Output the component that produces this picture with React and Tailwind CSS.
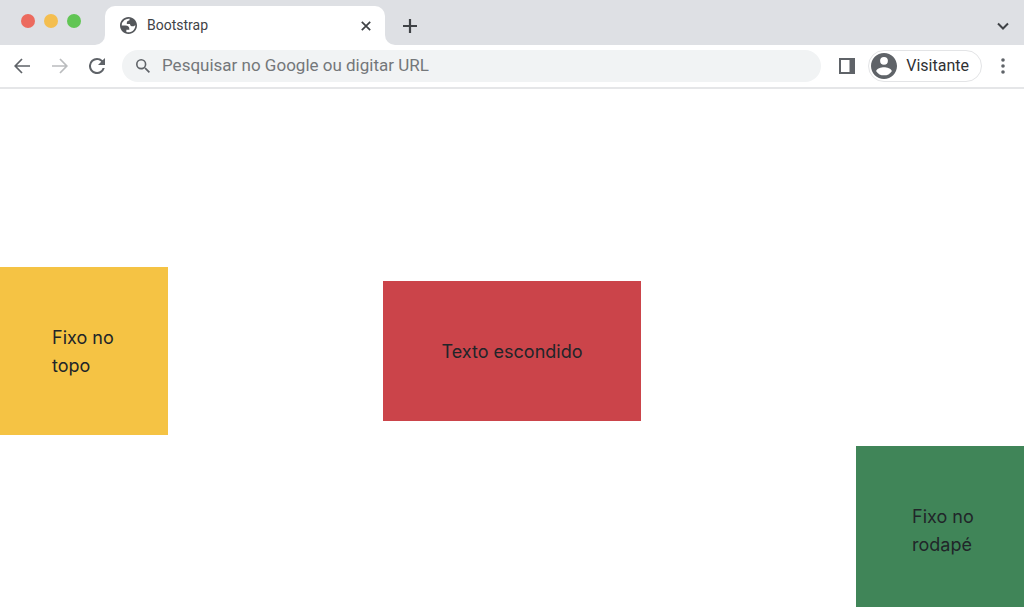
const windowButtons = ['bg-[#ec6a5e]', 'bg-[#f4be4f]', 'bg-[#61c554]']

function TabStrip() {
  return (
    <div className="flex h-[45px] bg-white">
      <div className="flex w-[105px] items-start gap-[9px] rounded-br-[10px] bg-[#dee0e4] pt-[14px] pl-[21px]">
        {windowButtons.map(color => (
          <span key={color} className={`size-[14px] rounded-full ${color}`} />
        ))}
      </div>
      <div className="bg-[#dee0e4] pt-[6px]">
        <div className="flex h-full w-[280px] items-center rounded-t-[10px] bg-white pr-3 pl-[15px]">
          <svg viewBox="2 2 20 20" className="size-[17px] text-[#54575b]" fill="currentColor">
            <path
              fillRule="evenodd"
              d="M12 2C6.48 2 2 6.48 2 12s4.48 10 10 10 10-4.48 10-10S17.52 2 12 2zM4 12h4.4c3.407.022 4.922 1.73 4.543 5.127H9.488v2.47a8.004 8.004 0 0 0 10.498-8.083C19.327 12.504 18.332 13 17 13c-2.137 0-3.206-.916-3.206-2.75h-3.748c-.274-2.728.683-4.092 2.87-4.092 0-.975.327-1.597.811-1.97A8.004 8.004 0 0 0 4 12z"
            />
          </svg>
          <span className="ml-[10px] flex-1 text-[14px] text-[#3f4246]">Bootstrap</span>
          <button aria-label="Fechar guia" className="flex size-[14px] items-center justify-center text-[#3f4246]">
            <svg viewBox="0 0 10 10" className="size-[10px]" fill="none" stroke="currentColor" strokeWidth="1.7">
              <path d="M.8.8l8.4 8.4M9.2.8L.8 9.2" />
            </svg>
          </button>
        </div>
      </div>
      <div className="flex flex-1 items-center justify-between rounded-bl-[10px] bg-[#dee0e4] pt-[6px] pr-[15px] pl-[18px] text-[#3f4246]">
        <button aria-label="Nova guia">
          <svg viewBox="0 0 14 14" className="size-[14px]" fill="none" stroke="currentColor" strokeWidth="2.2">
            <path d="M7 0v14M0 7h14" />
          </svg>
        </button>
        <button aria-label="Pesquisar guias">
          <svg viewBox="0 0 12 8" className="h-[8px] w-[12px]" fill="none" stroke="currentColor" strokeWidth="2">
            <path d="M1 1.5l5 5 5-5" />
          </svg>
        </button>
      </div>
    </div>
  )
}

function Toolbar() {
  return (
    <div className="flex h-[44px] items-center border-b-2 border-[#e5e6e8] bg-white pr-[19px] pl-[14px] text-[#5f6368]">
      <button aria-label="Voltar">
        <svg viewBox="0 0 16 16" className="size-[16px]" fill="none" stroke="currentColor" strokeWidth="1.7">
          <path d="M16 8H1.5M8 1L1.2 8 8 15" />
        </svg>
      </button>
      <button aria-label="Avançar" className="ml-[22px] text-[#babcbe]">
        <svg viewBox="0 0 16 16" className="size-[16px]" fill="none" stroke="currentColor" strokeWidth="1.7">
          <path d="M0 8h14.5M8 1l6.8 7L8 15" />
        </svg>
      </button>
      <button aria-label="Recarregar" className="ml-[21px]">
        <svg viewBox="4 4 16 16" className="size-[16px]" fill="currentColor">
          <path d="M17.65 6.35A7.96 7.96 0 0 0 12 4a8 8 0 1 0 7.73 10h-2.08A6 6 0 1 1 12 6c1.66 0 3.14.69 4.22 1.78L13 11h7V4z" />
        </svg>
      </button>
      <label className="ml-[17px] flex h-[32px] flex-1 items-center rounded-full bg-[#f1f3f4] pl-[14px]">
        <svg viewBox="3 3 17.5 17.5" className="size-[14px]" fill="currentColor">
          <path d="M15.5 14h-.79l-.28-.27A6.47 6.47 0 0 0 16 9.5 6.5 6.5 0 1 0 9.5 16c1.61 0 3.09-.59 4.23-1.57l.27.28v.79l5 4.99L20.49 19zm-6 0a4.5 4.5 0 1 1 0-9 4.5 4.5 0 0 1 0 9z" />
        </svg>
        <input
          type="text"
          aria-label="Barra de endereço"
          placeholder="Pesquisar no Google ou digitar URL"
          className="ml-[12px] min-w-0 flex-1 bg-transparent text-[17px] outline-none placeholder:text-[#74777a]"
        />
      </label>
      <button aria-label="Painel lateral" className="ml-[18px]">
        <svg viewBox="0 0 16 16" className="size-[16px]" fill="currentColor">
          <path fillRule="evenodd" d="M0 0h16v16H0zM2 2v12h8.5V2z" />
        </svg>
      </button>
      <button className="ml-[13px] flex h-[32px] items-center gap-[9px] rounded-full border border-[#e3e4e6] pr-[12px] pl-[2px]">
        <svg viewBox="2 2 20 20" className="size-[26px]" fill="currentColor">
          <path d="M12 2C6.48 2 2 6.48 2 12s4.48 10 10 10 10-4.48 10-10S17.52 2 12 2zm0 3a3 3 0 1 1 0 6 3 3 0 0 1 0-6zm0 14.2a7.2 7.2 0 0 1-6-3.22c.03-1.99 4-3.08 6-3.08 1.99 0 5.97 1.09 6 3.08a7.2 7.2 0 0 1-6 3.22z" />
        </svg>
        <span className="text-[16px] text-[#2f3134]">Visitante</span>
      </button>
      <button aria-label="Menu" className="ml-[19px]">
        <svg viewBox="0 0 4 16" className="h-[16px] w-[4px]" fill="currentColor">
          <circle cx="2" cy="2" r="1.8" />
          <circle cx="2" cy="8" r="1.8" />
          <circle cx="2" cy="14" r="1.8" />
        </svg>
      </button>
    </div>
  )
}

export default function App() {
  return (
    <div className="flex h-screen flex-col overflow-hidden bg-white font-['Roboto',sans-serif]">
      <header className="shrink-0">
        <TabStrip />
        <Toolbar />
      </header>
      <main className="flex flex-1 flex-col gap-[11px] overflow-hidden pt-[178px] font-['Inter',sans-serif] text-[18px] leading-[28px] text-[#212529]">
        <div className="grid shrink-0 grid-cols-[1fr_auto_1fr] items-center">
          <div className="w-[168px] bg-[#f5c344] pt-[57px] pb-[55px] pl-[52px]">
            Fixo no
            <br />
            topo
          </div>
          <div className="bg-[#cb444a] px-[59px] pt-[57px] pb-[55px]">Texto escondido</div>
        </div>
        <div className="w-[168px] shrink-0 self-end bg-[#408558] pt-[57px] pb-[55px] pl-[56px]">
          Fixo no
          <br />
          rodapé
        </div>
      </main>
    </div>
  )
}
